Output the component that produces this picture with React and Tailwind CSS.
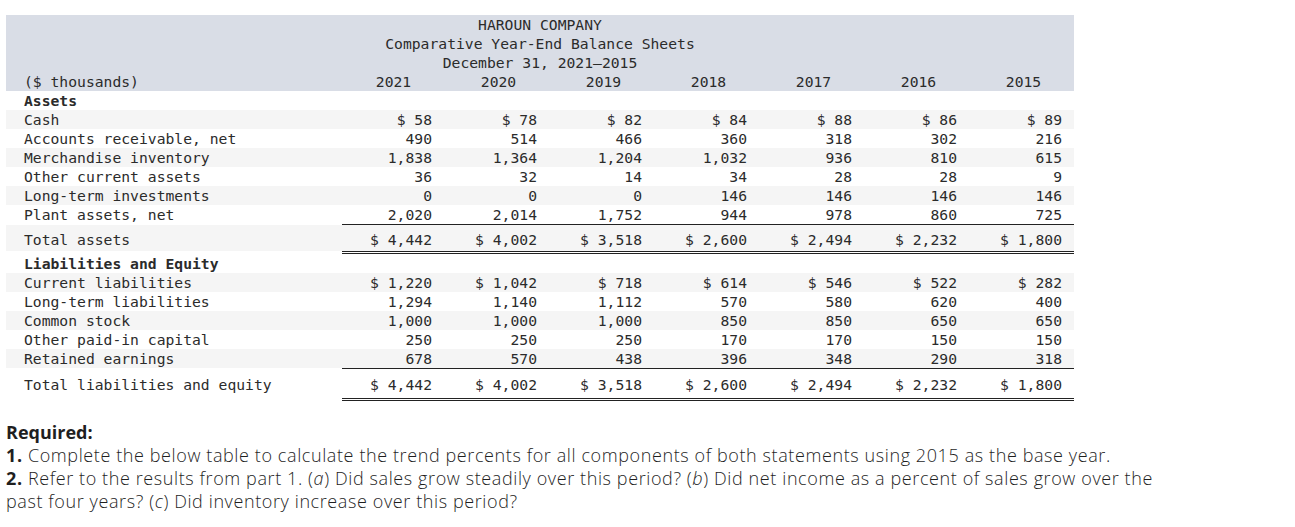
import React from "react";

const years = ["2021", "2020", "2019", "2018", "2017", "2016", "2015"];

const assets = [
  { label: "Cash", vals: ["$ 58", "$ 78", "$ 82", "$ 84", "$ 88", "$ 86", "$ 89"], stripe: true },
  { label: "Accounts receivable, net", vals: ["490", "514", "466", "360", "318", "302", "216"] },
  { label: "Merchandise inventory", vals: ["1,838", "1,364", "1,204", "1,032", "936", "810", "615"], stripe: true },
  { label: "Other current assets", vals: ["36", "32", "14", "34", "28", "28", "9"] },
  { label: "Long-term investments", vals: ["0", "0", "0", "146", "146", "146", "146"], stripe: true },
  { label: "Plant assets, net", vals: ["2,020", "2,014", "1,752", "944", "978", "860", "725"] },
];

const liabilities = [
  { label: "Current liabilities", vals: ["$ 1,220", "$ 1,042", "$ 718", "$ 614", "$ 546", "$ 522", "$ 282"], stripe: true },
  { label: "Long-term liabilities", vals: ["1,294", "1,140", "1,112", "570", "580", "620", "400"] },
  { label: "Common stock", vals: ["1,000", "1,000", "1,000", "850", "850", "650", "650"], stripe: true },
  { label: "Other paid-in capital", vals: ["250", "250", "250", "170", "170", "150", "150"] },
  { label: "Retained earnings", vals: ["678", "570", "438", "396", "348", "290", "318"], stripe: true },
];

const totals = ["$ 4,442", "$ 4,002", "$ 3,518", "$ 2,600", "$ 2,494", "$ 2,232", "$ 1,800"];

const Row = ({ label, vals, stripe, bold }) => (
  <div className={`flex h-[19px] leading-[19px] ${stripe ? "bg-[#f5f5f5]" : ""}`}>
    <div className={`w-[333px] pl-[18px] ${bold ? "font-bold" : ""}`}>{label}</div>
    {(vals || []).map((v, i) => (
      <div key={i} className="w-[105px] pr-3 text-right whitespace-pre">
        {v}
      </div>
    ))}
  </div>
);

const TotalRow = ({ label, stripe, height }) => (
  <div className={`flex leading-[19px] ${height} ${stripe ? "bg-[#f5f5f5]" : ""}`}>
    <div className="w-[333px] pl-[18px]">{label}</div>
    {totals.map((v, i) => (
      <div key={i} className="w-[105px] pr-3 text-right whitespace-pre">
        {v}
      </div>
    ))}
  </div>
);

const SingleLine = () => (
  <div className="flex">
    <div className="w-[336px]" />
    <div className="h-px w-[732px] bg-[#222]" />
  </div>
);

const DoubleLine = () => (
  <div className="flex">
    <div className="w-[336px]" />
    <div className="h-[3px] w-[732px] border-y border-[#222]" />
  </div>
);

const App = () => {
  return (
    <div className="w-[1295px] h-[527px] bg-white overflow-hidden">
      <div
        className="ml-[6px] mt-[15px] w-[1068px] text-[14.7px] text-[#2b2b2b]"
        style={{ fontFamily: '"DejaVu Sans Mono", "Liberation Mono", monospace' }}
      >
        <div className="bg-[#d9dde6] leading-[19px]">
          <div className="text-center">HAROUN COMPANY</div>
          <div className="text-center">Comparative Year-End Balance Sheets</div>
          <div className="text-center">December 31, 2021–2015</div>
          <div className="flex">
            <div className="w-[333px] pl-[18px]">($ thousands)</div>
            {years.map((y) => (
              <div key={y} className="w-[105px] pl-1 text-center">
                {y}
              </div>
            ))}
          </div>
        </div>

        <Row label="Assets" bold />
        {assets.map((r) => (
          <Row key={r.label} {...r} />
        ))}
        <SingleLine />
        <TotalRow label="Total assets" stripe height="h-[26px] pt-[5px]" />
        <DoubleLine />

        <Row label="Liabilities and Equity" bold />
        {liabilities.map((r) => (
          <Row key={r.label} {...r} />
        ))}
        <SingleLine />
        <TotalRow label="Total liabilities and equity" height="h-[29px] pt-[6px]" />
        <DoubleLine />
      </div>

      <div
        className="mt-[20px] pl-[6px] text-[18px] leading-[23px] text-[#1f1f1f] font-light tracking-[0.6px]"
        style={{ fontFamily: '"Open Sans", "Noto Sans", sans-serif' }}
      >
        <div className="font-bold tracking-normal">Required:</div>
        <div>
          <span className="font-bold">1.</span> Complete the below table to calculate the trend percents for all
          components of both statements using 2015 as the base year.
        </div>
        <div>
          <span className="font-bold">2.</span> Refer to the results from part 1. (<i>a</i>) Did sales grow steadily
          over this period? (<i>b</i>) Did net income as a percent of sales grow over the
          <br />
          past four years? (<i>c</i>) Did inventory increase over this period?
        </div>
      </div>
    </div>
  );
};

export default App;
